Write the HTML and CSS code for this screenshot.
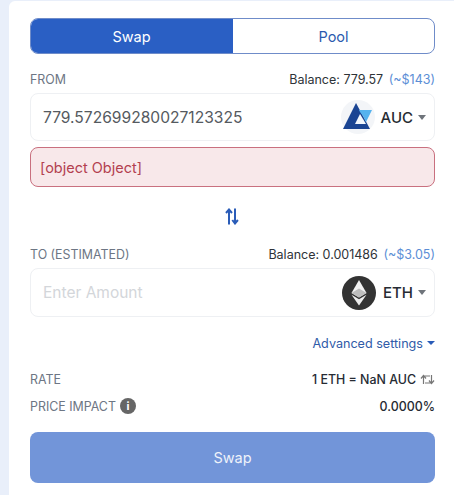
FILE: index.html
```html
<!DOCTYPE html>
<html lang="en">
<head>
    <meta charset="UTF-8">
    <title>Swap</title>
    <link rel="stylesheet" href="styles.css">
</head>
<body>
<div class="card">
    <div class="tabs">
        <div class="tab tab-active">Swap</div>
        <div class="tab">Pool</div>
    </div>

    <div class="label-row label-from">
        <span class="label">FROM</span>
        <span class="balance">Balance: 779.57 <span class="usd">(~$143)</span></span>
    </div>
    <div class="field">
        <span class="amount">779.572699280027123325</span>
        <div class="token">
            <svg class="token-icon token-auc" viewBox="0 0 34 34">
                <circle cx="17" cy="17" r="17" fill="#f3f5f8"/>
                <path d="M15 3 L29 29 L2 29 Z" fill="#1b4593"/>
                <path d="M14 24 L19 14 L25 24 Z" fill="#f3f8fd"/>
                <path d="M18 10 L31 10 L25 22 L22 16 L19 12 Z" fill="#56b3ee"/>
            </svg>
            <span class="token-name">AUC</span>
            <span class="caret"></span>
        </div>
    </div>
    <div class="error">[object Object]</div>

    <div class="switch">
        <svg width="14" height="17" viewBox="0 0 14 17">
            <path d="M4 16.500 V2 M1 5 L4 1.500 L7 5" fill="none" stroke="#2a5cb8" stroke-width="2"/>
            <path d="M10 0.500 V15 M7.300 12 L10 15.500 L12.900 12" fill="none" stroke="#2a5cb8" stroke-width="2"/>
        </svg>
    </div>

    <div class="label-row label-to">
        <span class="label">TO (ESTIMATED)</span>
        <span class="balance">Balance: 0.001486 <span class="usd">(~$3.05)</span></span>
    </div>
    <div class="field field-to">
        <span class="placeholder">Enter Amount</span>
        <div class="token">
            <svg class="token-icon" viewBox="0 0 34 34">
                <circle cx="17" cy="17" r="17" fill="#333333"/>
                <path d="M17 4 L24.500 17 L17 21.500 L9.500 17 Z" fill="#f2f2f2"/>
                <path d="M17 12.500 L24.500 17 L17 21.500 L9.500 17 Z" fill="#bdbdbd"/>
                <path d="M9.500 18.800 L17 23.300 L24.500 18.800 L17 29.500 Z" fill="#ececec"/>
            </svg>
            <span class="token-name">ETH</span>
            <span class="caret"></span>
        </div>
    </div>

    <div class="advanced">Advanced settings <span class="caret caret-blue"></span></div>

    <div class="info-row info-rate">
        <span class="label">RATE</span>
        <span class="info-value">1 ETH = NaN AUC
            <svg class="rate-icon" width="15" height="11" viewBox="0 0 15 11">
                <path d="M3.500 10 V2 H10 M1 4.500 L3.500 1.500 L6 4.500" fill="none" stroke="#777" stroke-width="1.200"/>
                <path d="M11.500 1 V9 H5 M9 6.500 L11.500 9.500 L14 6.500" fill="none" stroke="#777" stroke-width="1.200"/>
            </svg>
        </span>
    </div>
    <div class="info-row info-impact">
        <span class="label label-help">PRICE IMPACT <span class="help">i</span></span>
        <span class="info-value">0.0000%</span>
    </div>

    <div class="swap-btn">Swap</div>
</div>
</body>
</html>
```

FILE: styles.css
```css
html, body {
    margin: 0;
    padding: 0;
}

body {
    width: 454px;
    height: 495px;
    overflow: hidden;
    background-color: #e9effa;
    font-family: Inter, "Liberation Sans", sans-serif;
    color: #262b33;
}

.card {
    box-sizing: border-box;
    height: 495px;
    margin: 1px 0 0 9px;
    padding: 17px 19px 0 21px;
    background-color: #fff;
    border-radius: 6px 0 0 0;
}

.tabs {
    display: flex;
    height: 36px;
    box-sizing: border-box;
    border: 1px solid #6f8cc9;
    border-radius: 8px;
    overflow: hidden;
}

.tab {
    flex: 1;
    display: flex;
    align-items: center;
    justify-content: center;
    font-size: 14.500px;
    color: #2b5aae;
}

.tab-active {
    flex: 0 0 203px;
    margin: -1px 0 -1px -1px;
    background-color: #2a5fc4;
    color: #fff;
}

.label-row,
.info-row {
    display: flex;
    justify-content: space-between;
    align-items: center;
    font-size: 12.400px;
}

.label-from {
    margin-top: 17px;
    height: 16px;
}

.label-to {
    margin-top: 21px;
    height: 16px;
}

.label {
    color: #6d7684;
}

.balance {
    color: #2e3338;
    font-size: 12.500px;
}

.usd {
    color: #5b8ed6;
    margin-left: 2px;
}

.field {
    display: flex;
    justify-content: space-between;
    align-items: center;
    box-sizing: border-box;
    height: 48px;
    margin-top: 6px;
    padding: 0 8px 0 12px;
    border: 1px solid #eef0f3;
    border-radius: 8px;
    font-size: 15.600px;
}

.field-to {
    height: 49px;
    margin-top: 6px;
}

.amount {
    color: #555a60;
}

.placeholder {
    color: #d3d6da;
    font-size: 15.500px;
}

.token {
    display: flex;
    align-items: center;
}

.token-icon {
    width: 34px;
    height: 34px;
    margin-right: 7px;
}

.token-auc {
    margin-right: 6px;
}

.token-name {
    font-size: 15px;
    font-weight: 500;
    color: #262b33;
}

.caret {
    display: inline-block;
    margin-left: 5px;
    border-top: 5px solid #6f747b;
    border-left: 4.500px solid transparent;
    border-right: 4.500px solid transparent;
}

.error {
    box-sizing: border-box;
    height: 40px;
    margin-top: 6px;
    padding: 0 9px;
    display: flex;
    align-items: center;
    background-color: #f8e8ea;
    border: 1px solid #c9707f;
    border-radius: 8px;
    font-size: 14.500px;
    color: #b3404f;
}

.switch {
    display: flex;
    justify-content: center;
    margin-top: 21px;
    height: 17px;
    padding-right: 1px;
}

.advanced {
    display: flex;
    justify-content: flex-end;
    align-items: center;
    margin-top: 18px;
    height: 16px;
    font-size: 12.600px;
    color: #2f5ba8;
}

.caret-blue {
    margin-left: 4px;
    border-top: 4px solid #2a5cb8;
    border-left: 4px solid transparent;
    border-right: 4px solid transparent;
}

.info-rate {
    margin-top: 19px;
    height: 18px;
}

.info-impact {
    margin-top: 9px;
    height: 18px;
}

.info-value {
    display: flex;
    align-items: center;
    font-weight: 500;
    color: #262b33;
}

.rate-icon {
    margin-left: 4px;
}

.label-help {
    display: flex;
    align-items: center;
}

.help {
    display: flex;
    align-items: center;
    justify-content: center;
    width: 16px;
    height: 16px;
    margin-left: 4px;
    border-radius: 50%;
    background-color: #666;
    color: #fff;
    font-size: 11px;
    font-weight: 700;
}

.swap-btn {
    display: flex;
    align-items: center;
    justify-content: center;
    height: 51px;
    margin-top: 17px;
    background-color: #7295d9;
    border-radius: 8px;
    font-size: 14.500px;
    color: #eef2fa;
}
```
